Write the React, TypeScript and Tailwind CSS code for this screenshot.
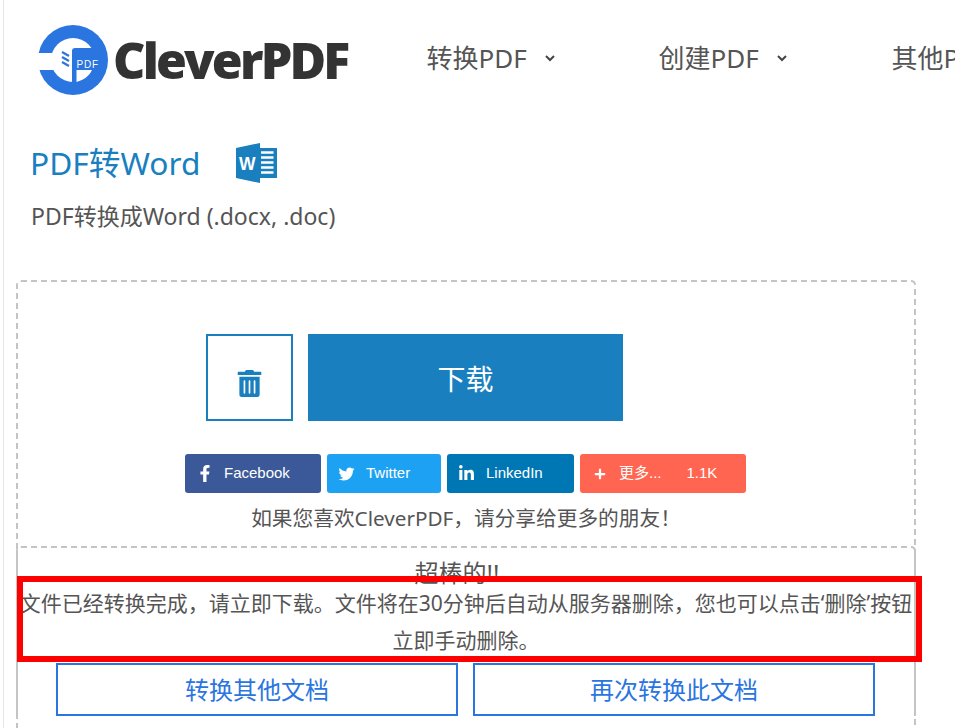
import { FaFacebookF, FaTwitter, FaLinkedinIn, FaPlus, FaTrashAlt } from "react-icons/fa";

const sans = "font-['Noto_Sans','Noto_Sans_CJK_SC',sans-serif]";

function Logo() {
  return (
    <svg width="70" height="70" viewBox="0 0 70 70" className="shrink-0">
      <circle cx="35" cy="35" r="35" fill="#2a75df" />
      <circle cx="35" cy="35" r="22" fill="#fff" />
      <rect x="0" y="28" width="24" height="17" fill="#fff" />
      <path d="M34 26 Q34 23 37 23 H60 V60 H34 Z" fill="#2a75df" />
      <path d="M24 27 L31 31 M24 32 L31 36 M24 37 L31 41" stroke="#2a75df" strokeWidth="2.2" />
      <path d="M38.5 45 H54 C52 50 46 55 38.5 57 Z" fill="#fff" />
      <text x="38.5" y="42.5" fontSize="10" fill="#fff" fontFamily="Liberation Sans" letterSpacing="0.8">PDF</text>
    </svg>
  );
}

function WordIcon() {
  return (
    <svg width="42" height="40" viewBox="0 0 42 40">
      <path d="M14 5 H41 V35 H14 Z" fill="#1a7fbf" />
      <path d="M25 9.5 H37.5 M25 14.5 H37.5 M25 19.5 H37.5 M25 24.5 H37.5 M25 29.5 H37.5" stroke="#fff" strokeWidth="2.6" />
      <path d="M0 5 L24 0 V40 L0 35 Z" fill="#1a7fbf" />
      <text x="3" y="27" fontSize="17.5" fontWeight="700" fill="#fff" fontFamily="Liberation Sans">W</text>
    </svg>
  );
}

function Chevron() {
  return (
    <svg width="10" height="7" viewBox="0 0 10 7" className="ml-[18px] mt-[1px]">
      <path d="M1 1 L5 5 L9 1" fill="none" stroke="#444" strokeWidth="2" />
    </svg>
  );
}

function Share({ w, bg, icon, label, extra }: { w: string; bg: string; icon: React.ReactNode; label: string; extra?: string }) {
  return (
    <div className={`${w} ${bg} h-[39px] rounded-[3px] flex items-center text-white text-[15px] font-['Liberation_Sans','Noto_Sans_CJK_SC',sans-serif]`}>
      <span className="w-[39px] flex justify-center shrink-0">{icon}</span>
      <span>{label}</span>
      {extra && <span className="ml-[25px]">{extra}</span>}
    </div>
  );
}

export default function App() {
  return (
    <div className={`w-[955px] h-[728px] overflow-hidden bg-white text-[#555] relative pl-[3px] ${sans}`}>
      <div className="w-[952px] h-[728px] border-l border-[#e6e6e6]">
        <header className="flex items-center h-[119px] pl-[34px]">
          <Logo />
          <span className="ml-[5px] mr-[79px] text-[50px] leading-none font-extrabold text-[#333] tracking-[-2.8px] font-['Open_Sans',sans-serif]">CleverPDF</span>
          <nav className="flex items-center text-[26px] text-[#555] whitespace-nowrap mb-[3px]">
            <span className="flex items-center w-[232px]">转换PDF<Chevron /></span>
            <span className="flex items-center w-[233px]">创建PDF<Chevron /></span>
            <span>其他PDF</span>
          </nav>
        </header>
        <section className="pl-[27px] pt-[20px]">
          <div className="flex items-center h-[48px]">
            <h1 className="text-[31.7px] leading-none text-[#1a7fbf] -ml-[1px]">PDF转Word</h1>
            <span className="ml-[36px]"><WordIcon /></span>
          </div>
          <p className="text-[23px] leading-[30px] mt-[14px] text-[#555]">PDF转换成Word (.docx, .doc)</p>
        </section>
        <main className="mt-[49px] ml-[12px] w-[900px] h-[500px] border-2 border-dashed border-[#c4c4c4] border-b-0 rounded-t-[5px]">
          <div className="flex pt-[52px] pl-[188px] gap-[15px]">
            <button className="w-[87px] h-[87px] border-2 border-[#1a7fbf] flex items-center justify-center pt-[11px]">
              <FaTrashAlt className="text-[#1a7fbf] w-[25px] h-[27px]" />
            </button>
            <button className="w-[315px] h-[87px] bg-[#1a7fbf] text-white text-[28px] pt-[2px]">下载</button>
          </div>
          <div className="flex gap-[6px] pl-[167px] mt-[33px]">
            <Share w="w-[136px]" bg="bg-[#3b5998]" icon={<FaFacebookF className="w-[16px] h-[17px]" />} label="Facebook" />
            <Share w="w-[114px]" bg="bg-[#1da1f2]" icon={<FaTwitter className="w-[17px] h-[16px]" />} label="Twitter" />
            <Share w="w-[127px]" bg="bg-[#0077b5]" icon={<FaLinkedinIn className="w-[17px] h-[17px]" />} label="LinkedIn" />
            <Share w="w-[166px]" bg="bg-[#ff6550]" icon={<FaPlus className="w-[12px] h-[12px]" />} label="更多..." extra="1.1K" />
          </div>
          <p className="text-center text-[20.7px] leading-[30px] mt-[10px]">如果您喜欢CleverPDF，请分享给更多的朋友！</p>
          <div className="mt-[13px] -ml-[2px] w-[900px] border-2 border-b-0 border-dashed border-[#c4c4c4] rounded-t-[5px] pt-[10px] text-center">
            <p className="text-[24px] leading-[30px] pr-[18px]">超棒的!!</p>
            <p className="text-[21px] leading-[37px] -mt-[3px] whitespace-pre-line">
              文件已经转换完成，请立即下载。文件将在30分钟后自动从服务器删除，您也可以点击‘删除’按钮{"\n"}立即手动删除。
            </p>
            <div className="flex gap-[15px] pl-[38px] mt-[4px]">
              <button className="w-[402px] h-[53px] border-2 border-[#2a75df] text-[#2a75df] text-[24px]">转换其他文档</button>
              <button className="w-[402px] h-[53px] border-2 border-[#2a75df] text-[#2a75df] text-[24px]">再次转换此文档</button>
            </div>
          </div>
        </main>
      </div>
      <div className="absolute left-[17px] top-[576px] w-[905px] h-[86px] border-[6px] border-[#ff0000]" />
    </div>
  );
}
